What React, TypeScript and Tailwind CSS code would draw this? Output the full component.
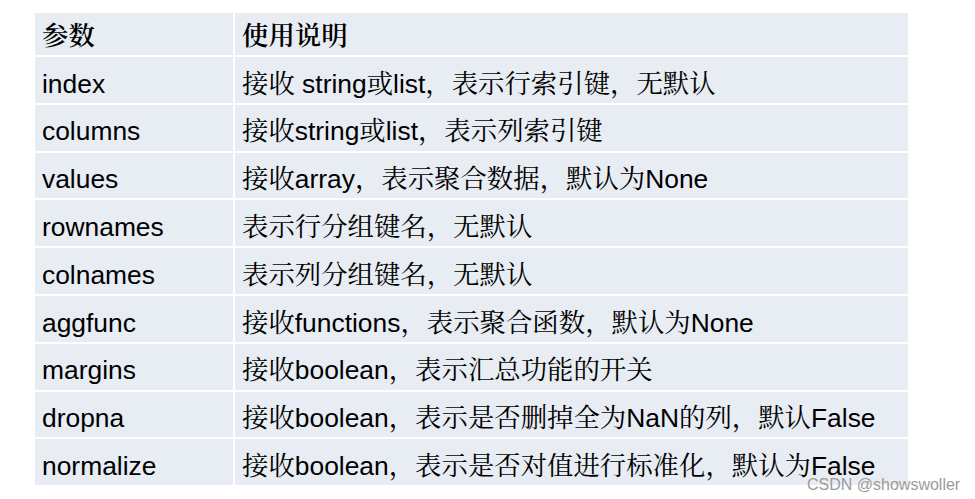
import React from "react";

const rows: [string, string][] = [
  ["index", "接收 string或list，表示行索引键，无默认"],
  ["columns", "接收string或list，表示列索引键"],
  ["values", "接收array，表示聚合数据，默认为None"],
  ["rownames", "表示行分组键名，无默认"],
  ["colnames", "表示列分组键名，无默认"],
  ["aggfunc", "接收functions，表示聚合函数，默认为None"],
  ["margins", "接收boolean，表示汇总功能的开关"],
  ["dropna", "接收boolean，表示是否删掉全为NaN的列，默认False"],
  ["normalize", "接收boolean，表示是否对值进行标准化，默认为False"],
];

const FONT = {
  fontFamily:
    '"Liberation Sans", Arial, "Noto Serif CJK SC", "Noto Sans CJK SC", sans-serif',
};

export default function App() {
  return (
    <div className="relative w-[975px] h-[499px] bg-white" style={FONT}>
      <div className="pt-[13px] pl-[35px]">
        <div className="grid w-[873px] grid-cols-[198px_1fr] gap-x-[2px] gap-y-[2px] text-[26.4px] text-black">
          <div className="h-[42px] bg-[#e8ecf3] pl-[7px] pt-[6px] flex items-center font-semibold">
            参数
          </div>
          <div className="h-[42px] bg-[#e8ecf3] pl-[7px] pt-[6px] flex items-center font-semibold">
            使用说明
          </div>
          {rows.map(([k, v]) => (
            <React.Fragment key={k}>
              <div className="h-[45.8px] bg-[#e8ecf3] pl-[7px] pt-[9px] flex items-center whitespace-nowrap">
                {k}
              </div>
              <div className="h-[45.8px] bg-[#e8ecf3] pl-[7px] pt-[9px] flex items-center whitespace-pre">
                {v}
              </div>
            </React.Fragment>
          ))}
        </div>
      </div>
      <div className="absolute left-[807px] top-[477px] text-[16px] text-[#9b9b9b] leading-none whitespace-nowrap">
        CSDN @showswoller
      </div>
    </div>
  );
}
